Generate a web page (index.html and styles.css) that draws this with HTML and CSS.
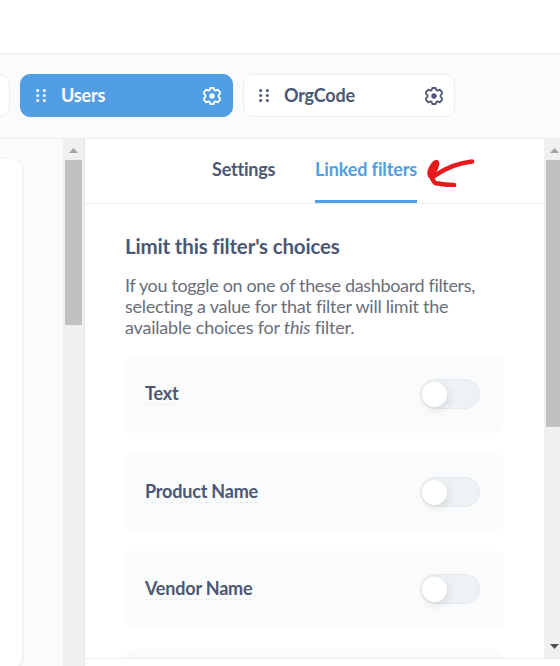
FILE: index.html
```html
<!DOCTYPE html>
<html lang="en">
<head>
<meta charset="utf-8">
<title>Linked filters</title>
<link rel="stylesheet" href="styles.css">
</head>
<body>
<svg class="defs" aria-hidden="true">
  <symbol id="grip" viewBox="0 0 10 13">
    <g fill="currentColor"><circle cx="1.7" cy="1.6" r="1.5"/><circle cx="8.3" cy="1.6" r="1.5"/><circle cx="1.7" cy="6.5" r="1.5"/><circle cx="8.3" cy="6.5" r="1.5"/><circle cx="1.7" cy="11.4" r="1.5"/><circle cx="8.3" cy="11.4" r="1.5"/></g>
  </symbol>
  <symbol id="gear" viewBox="0 0 18 18">
    <path fill="none" stroke="currentColor" stroke-width="1.8" stroke-linejoin="round" d="M7.300 1 H10.700 L11.300 3.100 L12.600 3.600 L14.700 2.700 L17 5.200 V6.700 L15.500 8.300 V9.700 L17 11.300 V12.800 L14.700 15.300 L12.600 14.400 L11.300 14.900 L10.700 17 H7.300 L6.700 14.900 L5.400 14.400 L3.300 15.300 L1 12.800 V11.300 L2.500 9.700 V8.300 L1 6.700 V5.200 L3.300 2.700 L5.400 3.600 L6.700 3.100 Z"/>
    <circle cx="9" cy="9" r="2.7" fill="currentColor"/>
  </symbol>
</svg>
<div class="app">
  <header class="top"></header>
  <div class="filters">
    <div class="chip chip-cut"></div>
    <div class="chip chip-active"><svg class="grip"><use href="#grip"/></svg><span class="name">Users</span><svg class="gear"><use href="#gear"/></svg></div>
    <div class="chip"><svg class="grip"><use href="#grip"/></svg><span class="name">OrgCode</span><svg class="gear"><use href="#gear"/></svg></div>
  </div>
  <div class="body">
    <div class="canvas"><div class="dashcard"></div></div>
    <div class="scroll scroll-left"><svg class="arrow" viewBox="0 0 9 5"><path d="M4.5 0 L9 5 H0 Z" fill="#a3a3a3"/></svg><div class="thumb"></div></div>
    <aside class="side">
      <div class="main">
        <div class="panel">
          <nav class="tabs">
            <a class="tab settings">Settings</a>
            <a class="tab selected">Linked filters</a>
            <svg class="mark" viewBox="0 0 50 30"><path fill="none" stroke="#e8191c" stroke-width="4.6" stroke-linecap="round" stroke-linejoin="round" d="M46 4.500 C34 6 20 10.500 9 18.500 M4 18 C2 14.500 8 5 10.500 5 C13 7 7 17.500 4 18.500 C7 20.500 7 25 9 26 C14 27 20 28 28 28"/></svg>
          </nav>
          <div class="content">
            <h2>Limit this filter's choices</h2>
            <p><span class="l1">If you toggle on one of these dashboard filters,</span><br><span class="l2">selecting a value for that filter will limit the</span><br><span class="l3">available choices for <em>this</em> filter.</span></p>
            <div class="cards">
              <div class="card"><span class="label">Text</span><span class="toggle"></span></div>
              <div class="card"><span class="label">Product Name</span><span class="toggle"></span></div>
              <div class="card"><span class="label">Vendor Name</span><span class="toggle"></span></div>
              <div class="card"></div>
            </div>
          </div>
        </div>
        <div class="scroll scroll-right"><svg class="arrow" viewBox="0 0 9 5"><path d="M4.5 0 L9 5 H0 Z" fill="#a3a3a3"/></svg><div class="thumb"></div><svg class="arrow down" viewBox="0 0 9 5"><path d="M4.5 5 L0 0 H9 Z" fill="#505050"/></svg></div>
      </div>
      <footer class="foot"></footer>
    </aside>
  </div>
</div>
</body>
</html>
```
FILE: styles.css
```css
* { box-sizing: border-box; }
body { margin: 0; background: #fff; color: #4c5773; font-family: Lato, "Liberation Sans", sans-serif; font-size: 18px; letter-spacing: -0.2px; }
.defs { display: block; width: 0; height: 0; }
.app { display: flex; flex-direction: column; width: 560px; height: 666px; overflow: hidden; }
.top { height: 54px; flex: none; border-bottom: 1px solid #eeecec; }
.filters { height: 85px; flex: none; display: flex; gap: 10px; padding-top: 20px; background: #f9fbfc; border-bottom: 1px solid #eeecec; }
.chip { width: 212px; height: 43px; flex: none; display: flex; align-items: center; padding: 0 11px 0 15px; border: 1px solid #eeecec; border-radius: 10px; background: #fff; }
.chip-cut { width: 30px; margin-left: -20px; }
.chip-active { width: 213px; color: #fff; background: #509ee3; border-color: #509ee3; }
.grip { width: 10px; height: 13px; flex: none; }
.name { margin-left: 15px; padding-bottom: 2px; font-weight: 700; }
.gear { width: 18px; height: 18px; flex: none; margin-left: auto; }
.body { display: flex; flex: 1; min-height: 0; }
.canvas { width: 63px; flex: none; padding-top: 20px; background: #f9fbfd; overflow: hidden; }
.dashcard { width: 42px; height: 509px; margin-left: -20px; background: #fff; border-radius: 10px; box-shadow: 0 1px 4px rgba(0,0,0,.1); }
.scroll { display: flex; flex-direction: column; align-items: center; flex: none; background: #f0f0f0; padding-top: 9px; }
.scroll-left { width: 21px; }
.arrow { width: 9px; height: 5px; flex: none; }
.thumb { width: 17px; height: 165px; margin-top: 7px; background: #c1c1c1; flex: none; }
.side { flex: 1; min-width: 0; display: flex; flex-direction: column; border-left: 1px solid #e6e7e9; }
.main { flex: 1; min-height: 0; display: flex; }
.panel { flex: 1; min-width: 0; overflow: hidden; }
.tabs { position: relative; height: 65px; display: flex; padding-left: 127px; gap: 38px; border-bottom: 1px solid #eeecec; }
.tab { height: 64px; padding-top: 20px; font-weight: 700; line-height: 21px; white-space: nowrap; letter-spacing: -0.2px; }
.settings { width: 65px; }
.selected { width: 102px; color: #509ee3; border-bottom: 3px solid #509ee3; letter-spacing: -0.12px; }
.mark { position: absolute; left: 341px; top: 18px; width: 50px; height: 30px; }
.content { padding: 30px 40px 0; }
h2 { margin: 0; font-size: 20.5px; line-height: 24px; font-weight: 700; letter-spacing: -0.17px; }
p { margin: 17px 0 17.8px; line-height: 21px; color: #696e7b; white-space: nowrap; }
.l1 { letter-spacing: -0.34px; }
.l2 { letter-spacing: -0.24px; }
.l3 { letter-spacing: -0.2px; }
.cards { display: flex; flex-direction: column; gap: 20.6px; }
.card { height: 77px; flex: none; width: 379px; display: flex; align-items: center; justify-content: space-between; padding: 0 24px 0.2px 20px; background: #f9fbfc; border-radius: 9px; }
.label { font-weight: 700; line-height: 21px; border-bottom: 1px dashed #e9ebed; }
.toggle { width: 60px; height: 30px; border: 1px solid #e9e9eb; border-radius: 15px; background: #edf2f5; padding: 2px 1px; }
.toggle::before { content: ""; display: block; width: 25px; height: 25px; border-radius: 50%; background: #fff; box-shadow: 2px 3px 8px rgba(0,0,0,.1); }
.scroll-right { width: 16px; align-items: flex-end; overflow: hidden; padding-right: 1px; }
.scroll-right .thumb { width: 14px; height: 267px; margin-right: -1px; }
.down { margin-top: auto; margin-bottom: 9px; }
.foot { height: 8px; flex: none; border-top: 1px solid #eeecec; }
```
